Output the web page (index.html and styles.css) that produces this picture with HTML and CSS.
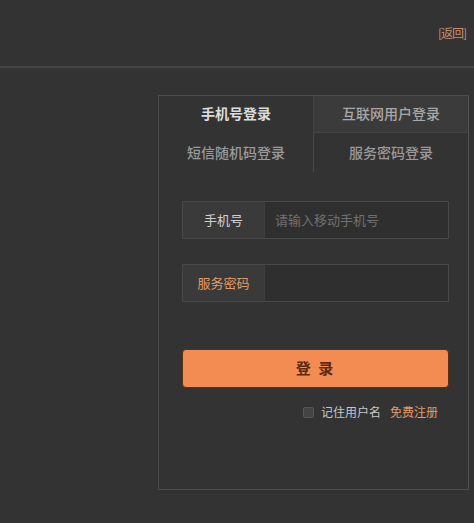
FILE: index.html
```html
<!DOCTYPE html>
<html lang="zh-CN">
<head>
<meta charset="utf-8">
<title>登录</title>
<link rel="stylesheet" href="styles.css">
</head>
<body>
<header class="topbar">
  <a class="back" href="#">[返回]</a>
</header>
<main class="main">
  <section class="panel">
    <div class="tabs">
      <div class="tab tab-active">手机号登录</div>
      <div class="tab tab-inactive">互联网用户登录</div>
      <div class="tab tab-sub">短信随机码登录</div>
      <div class="tab tab-sub tab-right">服务密码登录</div>
    </div>
    <div class="form">
      <div class="field">
        <span class="label">手机号</span>
        <span class="input placeholder">请输入移动手机号</span>
      </div>
      <div class="field field-pw">
        <span class="label label-orange">服务密码</span>
        <span class="input"></span>
      </div>
      <button class="submit" type="button">登 录</button>
      <div class="remember">
        <span class="checkbox"></span>
        <span class="remember-text">记住用户名</span>
        <a class="register" href="#">免费注册</a>
      </div>
    </div>
  </section>
</main>
</body>
</html>
```

FILE: styles.css
```css
* { box-sizing: border-box; }
html, body {
  margin: 0;
  padding: 0;
  background: #333333;
  font-family: "Noto Sans CJK SC", "Noto Sans", sans-serif;
  height: 100%;
}
.topbar {
  height: 68px;
  border-bottom: 2px solid #464646;
  display: flex;
  justify-content: flex-end;
  align-items: flex-start;
  padding: 25px 8px 0 0;
}
.back {
  font-size: 12px;
  line-height: 16px;
  color: #c8916a;
  text-decoration: none;
  letter-spacing: -1px;
}
.main {
  padding: 27px 0 0 158px;
}
.panel {
  width: 311px;
  height: 395px;
  border: 1px solid #4c4c4c;
  border-right-color: #505050;
}
.tabs {
  display: grid;
  grid-template-columns: 155px 154px;
  grid-template-rows: 37px 39px;
}
.tab {
  display: flex;
  align-items: center;
  justify-content: center;
  font-size: 14px;
  color: #9a9a9a;
  font-weight: 500;
}
.tab-active {
  color: #dcdcdc;
  font-weight: bold;
  border-right: 1px solid #444;
  padding-bottom: 3px;
}
.tab-inactive {
  background: #3b3b3b;
  border-bottom: 1px solid #444;
  color: #a8a8a8;
  padding-bottom: 2px;
}
.tab-sub {
  padding-bottom: 2px;
  border-right: 1px solid #464646;
}
.tab-right {
  border-right: none;
}
.form {
  padding: 29px 0 0 23px;
}
.field {
  width: 267px;
  height: 38px;
  border: 1px solid #484848;
  display: flex;
  font-size: 13px;
}
.field-pw {
  margin-top: 25px;
}
.label {
  width: 82px;
  background: #3a3a3a;
  display: flex;
  align-items: center;
  justify-content: center;
  color: #d0d0d0;
  border-right: 1px solid #3e3e3e;
  padding-bottom: 2px;
}
.label-orange {
  color: #e39a68;
}
.input {
  flex: 1;
  background: #2f2f2f;
  display: flex;
  align-items: center;
  padding-left: 10px;
  padding-bottom: 2px;
}
.placeholder {
  color: #707070;
}
.submit {
  display: block;
  margin-top: 47px;
  width: 267px;
  height: 39px;
  border: 1px solid #5a2e14;
  border-radius: 4px;
  background: #f28c52;
  color: #5b2a10;
  font-family: "Noto Sans CJK SC", sans-serif;
  font-size: 15px;
  font-weight: bold;
  letter-spacing: 2px;
  padding: 0 0 2px 0;
  cursor: pointer;
}
.remember {
  display: flex;
  align-items: center;
  justify-content: flex-end;
  width: 256px;
  margin-top: 16px;
  font-size: 12px;
  line-height: 16px;
}
.checkbox {
  width: 11px;
  height: 11px;
  border: 1px solid #555;
  background: #444;
  border-radius: 2px;
  margin-right: 7px;
}
.remember-text {
  color: #c8c8c8;
  margin-right: 9px;
}
.register {
  color: #e29b68;
  text-decoration: none;
}
```
